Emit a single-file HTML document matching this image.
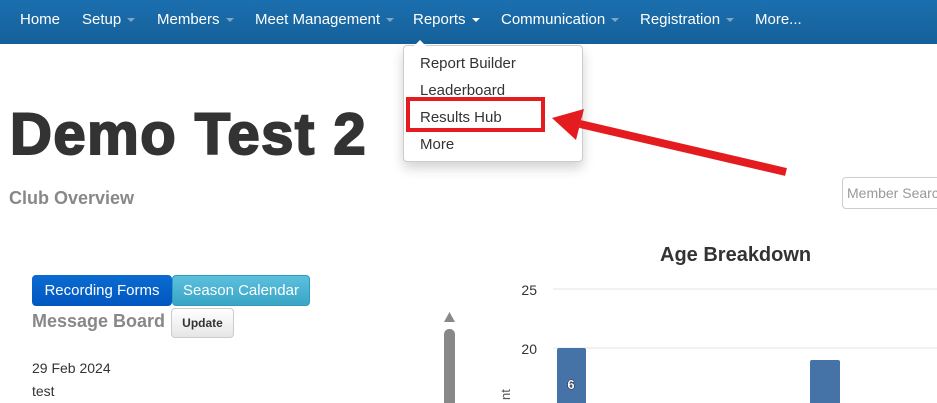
<!DOCTYPE html>
<html><head><style>
*{margin:0;padding:0;box-sizing:border-box}
body{width:937px;height:403px;overflow:hidden;background:#fff;font-family:"Liberation Sans",Arial,sans-serif;position:relative;color:#333}
.nav{position:absolute;left:0;top:0;width:937px;height:44px;background:linear-gradient(#1b6fae,#15609a);}
.nav span{position:absolute;top:11px;color:#fff;font-size:15px;white-space:nowrap}
.c{display:inline-block;width:0;height:0;border-left:4px solid transparent;border-right:4px solid transparent;border-top:4px solid #7fa6c8;vertical-align:middle;margin-left:6px}
.cw{border-top-color:#fff}
.dd{position:absolute;left:403px;top:45px;width:180px;height:117px;background:#fff;border:1px solid #ccc;border-radius:4px;box-shadow:0 6px 12px rgba(0,0,0,.18)}
.dd div{position:absolute;left:16px;font-size:15px;color:#333}
.ab{position:absolute}
</style></head><body>
<div class="nav">
<span style="left:20px">Home</span>
<span style="left:82px">Setup<i class="c"></i></span>
<span style="left:157px">Members<i class="c"></i></span>
<span style="left:255px">Meet Management<i class="c"></i></span>
<span style="left:413px">Reports<i class="c cw"></i></span>
<span style="left:501px">Communication<i class="c"></i></span>
<span style="left:640px">Registration<i class="c"></i></span>
<span style="left:755px">More...</span>
</div>
<div class="ab" style="left:414px;top:40px;width:0;height:0;border-left:6px solid transparent;border-right:6px solid transparent;border-bottom:6px solid #fff;z-index:3"></div>
<div class="dd">
<div style="top:9px">Report Builder</div>
<div style="top:36px">Leaderboard</div>
<div style="top:63px">Results Hub</div>
<div style="top:90px">More</div>
</div>
<div class="ab" style="left:406px;top:97px;width:139px;height:35px;border:4px solid #e51c1f"></div>
<svg class="ab" style="left:0;top:0" width="937" height="403">
<line x1="786" y1="172" x2="580" y2="124" stroke="#e51c1f" stroke-width="8"/>
<polygon points="552,118 584,109 576,140" fill="#e51c1f"/>
<line x1="553" y1="289" x2="937" y2="289" stroke="#e6e6e6"/>
<line x1="553" y1="348" x2="937" y2="348" stroke="#e6e6e6"/>
<rect x="557" y="348" width="29" height="60" rx="2" fill="#4572a7"/>
<rect x="810" y="360" width="30" height="50" rx="2" fill="#4572a7"/>
<text x="571" y="389" font-size="13" font-weight="bold" fill="#fff" stroke="#000" stroke-width="0.8" paint-order="stroke" text-anchor="middle" font-family="Liberation Sans">6</text>
<text x="537" y="295" font-size="14" fill="#333" text-anchor="end" font-family="Liberation Sans">25</text>
<text x="537" y="354" font-size="14" fill="#333" text-anchor="end" font-family="Liberation Sans">20</text>
<text x="510" y="400" font-size="13" fill="#555" transform="rotate(-90 510 400)" font-family="Liberation Sans">nt</text>
<polygon points="444,322 455,322 449.5,312" fill="#888"/>
<rect x="444" y="329" width="11" height="80" rx="5" fill="#888"/>
</svg>
<div class="ab" style="left:10px;top:101px;font-size:58px;font-weight:bold;color:#333;letter-spacing:1.5px;-webkit-text-stroke:2px #333">Demo Test 2</div>
<div class="ab" style="left:9px;top:188px;font-size:18px;font-weight:bold;color:#888">Club Overview</div>
<div class="ab" style="left:842px;top:177px;width:110px;height:32px;border:1px solid #ccc;border-radius:4px;font-size:14px;color:#999;padding:7px 4px;white-space:nowrap">Member Search</div>
<div class="ab" style="left:660px;top:244px;font-size:20px;font-weight:bold;color:#333">Age Breakdown</div>
<div class="ab" style="left:32px;top:275px;width:140px;height:31px;background:linear-gradient(#0a6bd0,#0257c0);border-radius:4px;color:#fff;font-size:15px;text-align:center;line-height:31px">Recording Forms</div>
<div class="ab" style="left:172px;top:275px;width:138px;height:31px;background:linear-gradient(#5bc0de,#3aa5c6);border:1px solid #2f9bbd;border-radius:4px;color:#fff;font-size:15px;text-align:center;line-height:29px">Season Calendar</div>
<div class="ab" style="left:32px;top:311px;font-size:18px;font-weight:bold;color:#888">Message Board</div>
<div class="ab" style="left:171px;top:308px;width:63px;height:30px;background:linear-gradient(#fff,#e6e6e6);border:1px solid #ccc;border-radius:4px;font-size:12px;font-weight:bold;text-align:center;line-height:28px;color:#333">Update</div>
<div class="ab" style="left:32px;top:360px;font-size:14px;color:#333">29 Feb 2024</div>
<div class="ab" style="left:32px;top:383px;font-size:14px;color:#333">test</div>
</body></html>
